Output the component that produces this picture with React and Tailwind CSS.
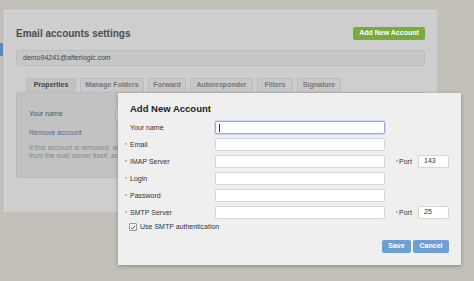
import React from "react";

const tabs = [
  { name: "Properties", w: "w-[50px]", active: true },
  { name: "Manage Folders", w: "w-[64px]" },
  { name: "Forward", w: "w-[38px]" },
  { name: "Autoresponder", w: "w-[63px]" },
  { name: "Filters", w: "w-[36px]" },
  { name: "Signature", w: "w-[44px]" },
];

const fields = [
  { label: "Your name", required: false, focus: true },
  { label: "Email", required: true },
  { label: "IMAP Server", required: true, port: "143" },
  { label: "Login", required: true },
  { label: "Password", required: true },
  { label: "SMTP Server", required: true, port: "25" },
];

function Field({ label, required, focus, port }) {
  return (
    <div className="flex items-center h-[13px]">
      <div className="w-[90px] flex items-center text-[7px] leading-[8px] text-[#333]">
        <span className="w-[3px] mr-[2px] text-[5px] leading-[6px] text-[#c0392b]">{required ? "*" : ""}</span>
        <span>{label}</span>
      </div>
      <div
        className={`w-[170px] h-[13px] bg-white rounded-[2px] border flex items-center ${
          focus
            ? "border-[#8fb0d6] shadow-[0_0_0_1px_#c9dcf0]"
            : "border-[#d6d6d6]"
        }`}
      >
        {focus && <span className="ml-[3px] w-[1px] h-[8px] bg-[#333]" />}
      </div>
      {port && (
        <>
          <div className="ml-[11px] w-[22px] flex items-center text-[7px] leading-[8px] text-[#333]">
            <span className="w-[3px] text-[5px] leading-[6px] text-[#c0392b]">*</span>
            <span>Port</span>
          </div>
          <div className="w-[31px] h-[13px] bg-white rounded-[2px] border border-[#d6d6d6] flex items-center pl-[5px] text-[7px] text-[#333]">
            {port}
          </div>
        </>
      )}
    </div>
  );
}

export default function App() {
  return (
    <div className="relative w-[474px] h-[281px] overflow-hidden bg-[#c3c0ba] flex font-['Liberation_Sans',Arial,sans-serif]">
      {/* sidebar edge */}
      <div className="w-[4px] shrink-0 pt-[43px]">
        <div className="w-[3px] h-[13px] bg-[#5b86c0]" />
      </div>

      {/* settings panel (dimmed) */}
      <div className="mt-[10px] w-[433px] h-[202px] bg-[#cecece] border-t border-l border-[#d8d8d8] pl-[11px] pr-[12px]">
        <div className="mt-[16px] flex items-center justify-between h-[13px]">
          <h2 className="text-[10px] font-bold text-[#4d4d4d]">Email accounts settings</h2>
          <button className="w-[72px] h-[13px] rounded-[2px] bg-[#79aa3d] text-white text-[7px] font-bold">
            Add New Account
          </button>
        </div>

        <div className="mt-[10px] h-[16px] rounded-[2px] border border-[#bcbcbc] bg-[#c7c7c7] flex items-center pl-[6px] text-[7px] text-[#444]">
          demo94241@afterlogic.com
        </div>

        <div className="mt-[12px] pl-[10px] flex gap-[4px]">
          {tabs.map((t) => (
            <div
              key={t.name}
              className={`${t.w} h-[14px] rounded-t-[2px] border border-b-0 border-[#bcbcbc] flex items-center justify-center text-[7px] font-bold ${
                t.active ? "bg-[#c2c2c2] text-[#444]" : "bg-[#c8c8c8] text-[#777]"
              }`}
            >
              {t.name}
            </div>
          ))}
        </div>

        <div className="h-[86px] rounded-[2px] border border-[#bbbbbb] bg-[#c2c2c2] pl-[12px]">
          <div className="mt-[14px] flex items-center h-[14px]">
            <span className="w-[86px] text-[7px] text-[#555]">Your name</span>
            <div className="w-[200px] h-[14px] rounded-[2px] border border-[#b8b8b8] bg-[#cfcfcf]" />
          </div>
          <div className="mt-[8px] text-[7px] leading-[8px] text-[#4d6d9a]">Remove account</div>
          <p className="mt-[7px] text-[7px] leading-[8px] text-[#888] whitespace-nowrap">
            If this account is removed, all its messages and folders will be deleted
            <br />
            from the mail server itself, and this action cannot be undone.
          </p>
        </div>
      </div>

      {/* modal */}
      <div className="absolute left-[118px] top-[93px] w-[343px] h-[172px] bg-[#efefef] shadow-[0_1px_4px_rgba(0,0,0,0.3)] pl-[7px] pr-[12px] pt-[10px]">
        <h3 className="pl-[5px] text-[9.5px] leading-[12px] font-bold text-[#222]">Add New Account</h3>
        <div className="mt-[6px] flex flex-col gap-[4px]">
          {fields.map((f) => (
            <Field key={f.label} {...f} />
          ))}
        </div>
        <div className="mt-[3px] h-[10px] pl-[4px] flex items-center">
          <span className="w-[8px] h-[8px] rounded-[1px] border border-[#9a9a9a] bg-white flex items-center justify-center">
            <svg viewBox="0 0 8 8" className="w-[7px] h-[7px]">
              <path d="M1.3 4.2 L3.1 6 L6.8 1.6" fill="none" stroke="#333" strokeWidth="1.2" />
            </svg>
          </span>
          <span className="ml-[3px] text-[7px] text-[#333]">Use SMTP authentication</span>
        </div>
        <div className="mt-[8px] flex justify-end gap-[2px]">
          <button className="w-[29px] h-[13px] rounded-[2px] bg-[#6b9fd6] text-white text-[7px] font-bold">
            Save
          </button>
          <button className="w-[36px] h-[13px] rounded-[2px] bg-[#6b9fd6] text-white text-[7px] font-bold">
            Cancel
          </button>
        </div>
      </div>
    </div>
  );
}
